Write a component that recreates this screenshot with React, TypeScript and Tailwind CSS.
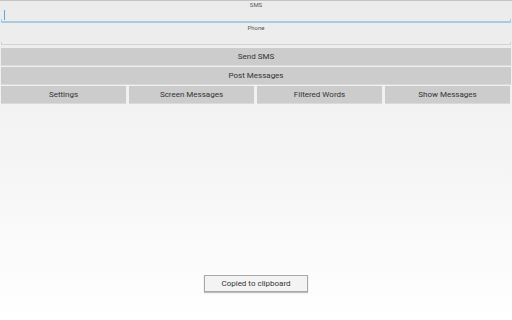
export default function App() {
  const tabs = ['Settings', 'Screen Messages', 'Filtered Words', 'Show Messages']

  return (
    <div
      className="w-[512px] h-[320px] overflow-hidden flex flex-col bg-gradient-to-b from-[#ebebeb] to-[#ffffff] text-[#333333]"
      style={{ fontFamily: 'Roboto, "Liberation Sans", sans-serif' }}
    >
      <div className="h-[1px] bg-[#c4c4c4] shrink-0" />

      {/* SMS field */}
      <div className="relative h-[23px] shrink-0">
        <p className="text-center text-[6px] leading-[6px] pt-[1px] text-[#555555]">SMS</p>
        <span className="absolute left-[4px] top-[9px] w-[1px] h-[10px] bg-[#5aa6e0]" />
        <div className="absolute left-[1px] right-[1px] top-[20px] h-[2px] bg-[#a9cbe4]" />
        <span className="absolute left-[1px] top-[18px] w-[1px] h-[4px] bg-[#a9cbe4]" />
        <span className="absolute right-[1px] top-[18px] w-[1px] h-[4px] bg-[#a9cbe4]" />
      </div>

      {/* Phone field */}
      <div className="relative h-[23px] shrink-0">
        <p className="text-center text-[6px] leading-[6px] pt-[1px] text-[#555555]">Phone</p>
        <div className="absolute left-[1px] right-[1px] top-[20px] h-[1px] bg-[#d2d2d2]" />
        <span className="absolute left-[1px] top-[18px] w-[1px] h-[3px] bg-[#d2d2d2]" />
        <span className="absolute right-[1px] top-[18px] w-[1px] h-[3px] bg-[#d2d2d2]" />
      </div>

      <div className="flex flex-col gap-[2px] px-[1px] pt-[1px] shrink-0">
        <button className="h-[17px] bg-[#cccccc] shadow-[0_1px_0_#dadada] text-[8px] text-[#333333]">Send SMS</button>
        <button className="h-[17px] bg-[#cccccc] shadow-[0_1px_0_#dadada] text-[8px] text-[#333333]">Post Messages</button>
        <div className="flex gap-[3px] pr-[1px]">
          {tabs.map((t) => (
            <button
              key={t}
              className="flex-1 h-[17px] bg-[#cccccc] shadow-[0_1px_0_#dadada] text-[8px] text-[#333333]"
            >
              {t}
            </button>
          ))}
        </div>
      </div>

      <div className="flex-1" />

      <div className="flex justify-center pb-[28px] shrink-0">
        <div className="w-[104px] h-[17px] bg-[#f3f3f3] border border-[#a8a8a8] shadow-[0_1px_1px_rgba(0,0,0,0.25)] flex items-center justify-center text-[8px] text-[#333333]">
          Copied to clipboard
        </div>
      </div>
    </div>
  )
}
